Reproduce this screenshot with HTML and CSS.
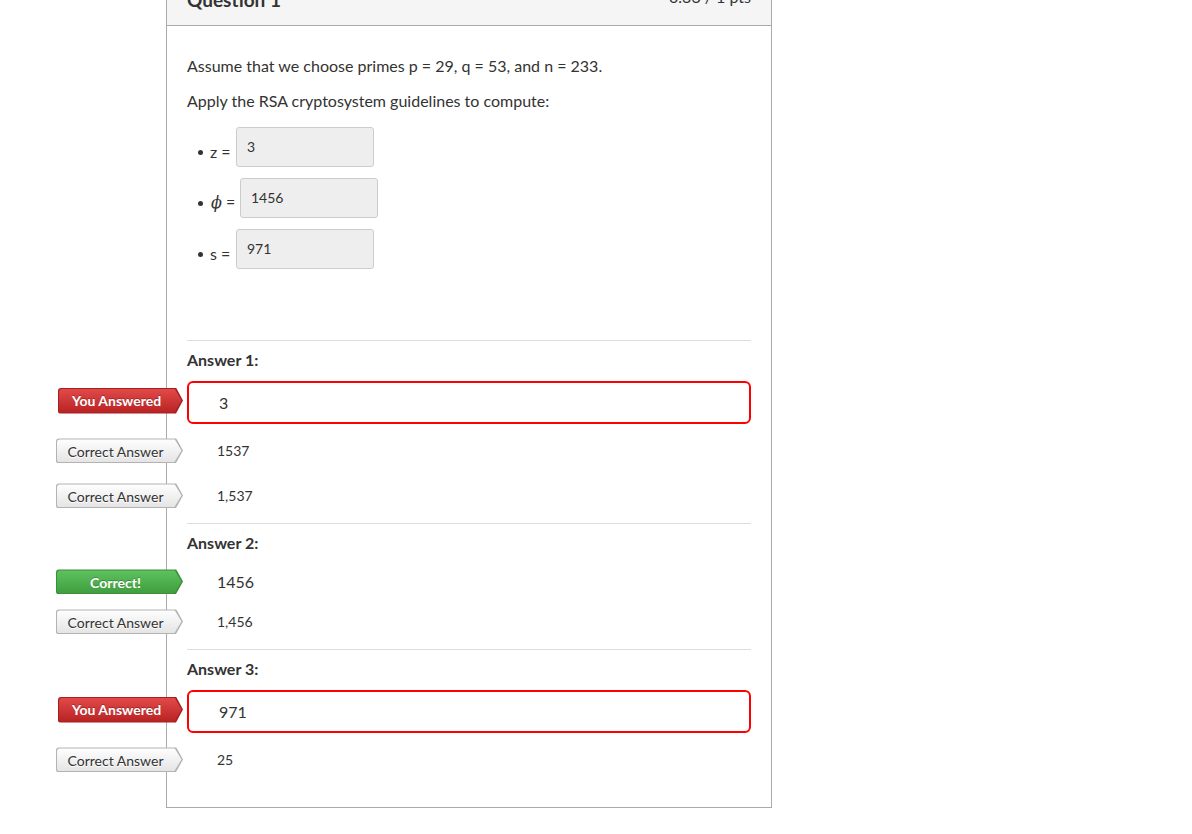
FILE: index.html
```html
<!DOCTYPE html>
<html lang="en">
<head>
  <meta charset="UTF-8">
  <meta name="viewport" content="width=device-width, initial-scale=1.0">
  <title>Quiz Results - Question 1</title>
  <link rel="stylesheet" href="styles.css">
</head>
<body>
  <div class="quiz">
    <div class="question">
      <!-- 문제 헤더 -->
      <div class="questionHeader">
        <span class="questionName">Question 1</span>
        <span class="questionPoints">0.33 / 1 pts</span>
      </div>

      <!-- 문제 본문 -->
      <div class="questionText">
        <p>Assume that we choose primes p = 29, q = 53, and n = 233.</p>
        <p>Apply the RSA cryptosystem guidelines to compute:</p>
        <ul class="blanks">
          <li><span class="blankLabel">z =</span><span class="blankInput">3</span></li>
          <li><span class="blankLabel wide"><i class="phi">ϕ</i> =</span><span class="blankInput">1456</span></li>
          <li><span class="blankLabel">s =</span><span class="blankInput">971</span></li>
        </ul>
      </div>

      <!-- 답안 -->
      <div class="answers">
        <div class="answerGroup">
          <div class="answerTitle">Answer 1:</div>
          <div class="answerRow wrong">
            <span class="arrow red">You Answered</span>
            3
          </div>
          <div class="answerRow">
            <span class="arrow">Correct Answer</span>
            1537
          </div>
          <div class="answerRow">
            <span class="arrow">Correct Answer</span>
            1,537
          </div>
        </div>

        <div class="answerGroup">
          <div class="answerTitle">Answer 2:</div>
          <div class="answerRow picked">
            <span class="arrow green">Correct!</span>
            1456
          </div>
          <div class="answerRow">
            <span class="arrow">Correct Answer</span>
            1,456
          </div>
        </div>

        <div class="answerGroup">
          <div class="answerTitle">Answer 3:</div>
          <div class="answerRow wrong">
            <span class="arrow red">You Answered</span>
            971
          </div>
          <div class="answerRow">
            <span class="arrow">Correct Answer</span>
            25
          </div>
        </div>
      </div>
    </div>
  </div>
</body>
</html>
```

FILE: styles.css
```css
/* 공통 스타일 */
body {
  margin: 0;
  font-family: Lato, "Open Sans", sans-serif;
  color: #333;
  background: #fff;
}

/* 스크롤된 상태처럼 위쪽을 잘라서 보여줌 */
.quiz {
  margin: -22px 0 0 166px;
  width: 606px;
}

.question {
  border: 1px solid #aaa;
}

/* 헤더 */
.questionHeader {
  height: 47px;
  box-sizing: border-box;
  padding: 9px 20px 0;
  background: #f5f5f5;
  border-bottom: 1px solid #aaa;
  display: flex;
  justify-content: space-between;
  align-items: flex-start;
}

.questionName {
  font-size: 19px;
  font-weight: bold;
  line-height: 24px;
}

.questionPoints {
  font-size: 16px;
  line-height: 18px;
}

/* 문제 본문 */
.questionText {
  padding: 28px 20px 71px;
  font-size: 16px;
  line-height: 24px;
}

.questionText p {
  margin: 0 0 11px;
}

.blanks {
  list-style: none;
  margin: 14px 0 0;
  padding-left: 23px;
}

.blanks li {
  position: relative;
  margin-bottom: 11px;
}

.blanks li:last-child {
  margin-bottom: 0;
}

/* 목록 점 */
.blanks li::before {
  content: "";
  position: absolute;
  left: -12px;
  bottom: 12px;
  width: 5px;
  height: 5px;
  border-radius: 50%;
  background: #333;
}

.blanks li > span {
  vertical-align: bottom;
}

.blankLabel {
  display: inline-block;
  width: 26px;
  line-height: 20px;
  padding-bottom: 5px;
}

.blankLabel.wide {
  width: 30px;
}

.phi {
  font-family: "DejaVu Serif", serif;
  font-size: 16px;
  margin-left: 1px;
}

.blankInput {
  display: inline-flex;
  align-items: center;
  box-sizing: border-box;
  width: 138px;
  height: 40px;
  padding: 0 0 1px 10px;
  background: #eee;
  border: 1px solid #ccc;
  border-radius: 3px;
  font-size: 14px;
}

/* 답안 */
.answers {
  padding: 0 20px 20px;
}

.answerGroup {
  border-top: 1px solid #ddd;
  padding-bottom: 15px;
}

.answerTitle {
  height: 40px;
  line-height: 37px;
  font-size: 16px;
  font-weight: bold;
}

.answerRow {
  position: relative;
  display: flex;
  align-items: center;
  height: 25px;
  padding-left: 30px;
  font-size: 14px;
}

.answerRow + .answerRow {
  margin-top: 20px;
}

.answerRow.wrong {
  height: 43px;
  box-sizing: border-box;
  border: 2px solid #f00;
  border-radius: 6px;
  font-size: 16px;
}

.answerRow.wrong + .answerRow {
  margin-top: 14px;
}

.answerRow.picked {
  margin-top: 5px;
  font-size: 16px;
}

.answerRow.picked + .answerRow {
  margin-top: 15px;
}

/* 화살표 라벨 */
.arrow {
  position: absolute;
  left: -131px;
  top: 50%;
  transform: translateY(-50%);
  width: 127px;
  height: 25px;
  box-sizing: border-box;
  padding-right: 8px;
  line-height: 25px;
  text-align: center;
  font-size: 14px;
  color: #333;
  text-shadow: 0 1px 0 #fff;
  z-index: 1;
}

.arrow::before,
.arrow::after {
  content: "";
  position: absolute;
  border-radius: 3px 0 0 3px;
  clip-path: polygon(0 0, calc(100% - 7px) 0, 100% 50%, calc(100% - 7px) 100%, 0 100%);
}

.arrow::before {
  inset: 0;
  background: #b3b3b3;
  z-index: -2;
}

.arrow::after {
  top: 1px;
  left: 1px;
  right: 1.5px;
  bottom: 1px;
  background: linear-gradient(#fefefe, #e4e4e4);
  z-index: -1;
}

.arrow.red {
  width: 125px;
  margin-top: -2px;
  height: 26px;
  line-height: 26px;
  font-weight: bold;
  color: #fff;
  text-shadow: 0 -1px 0 rgba(0, 0, 0, 0.3);
}

.arrow.red::before {
  background: #a61f1f;
}

.arrow.red::after {
  background: linear-gradient(#e24a4a, #b82222);
}

.arrow.green {
  font-weight: bold;
  color: #fff;
  text-shadow: 0 -1px 0 rgba(0, 0, 0, 0.25);
}

.arrow.green::before {
  background: #3b8f3b;
}

.arrow.green::after {
  background: linear-gradient(#5ec15e, #3f9e3f);
}
```
